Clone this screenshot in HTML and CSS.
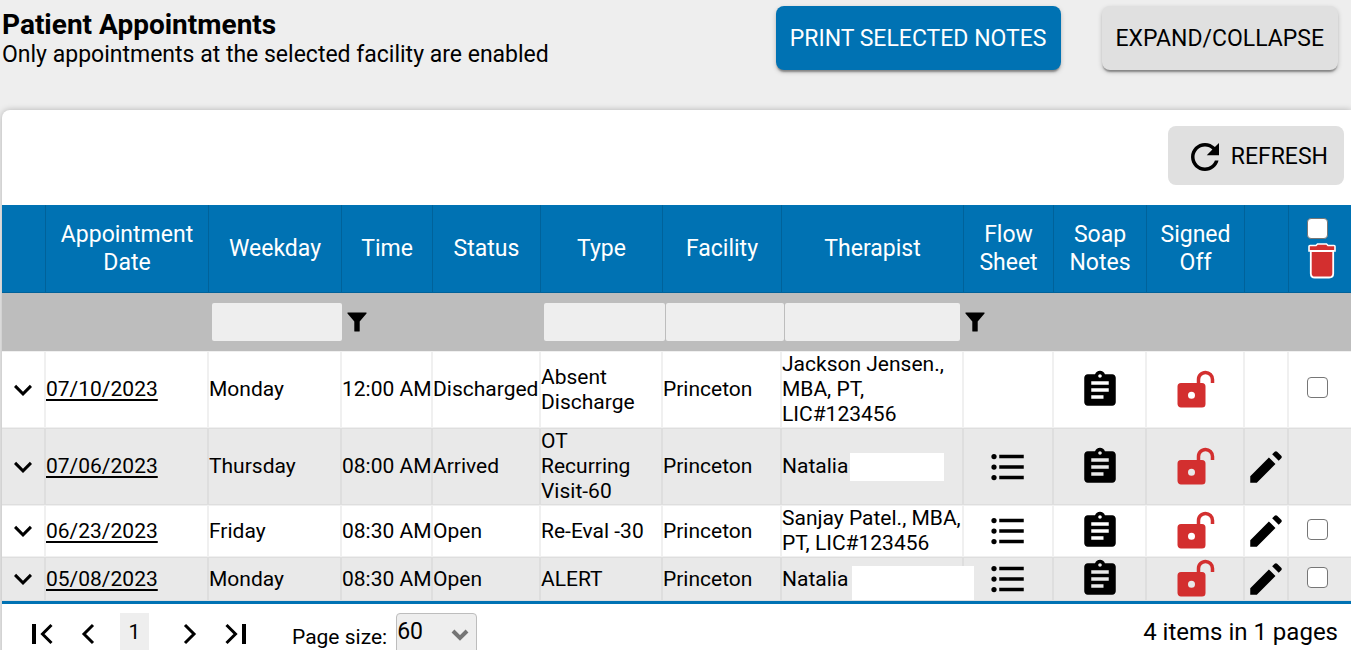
FILE: index.html
```html
<!DOCTYPE html>
<html lang="en">
<head>
<meta charset="utf-8">
<meta name="viewport" content="width=device-width, initial-scale=1">
<title>Patient Appointments</title>
<link rel="stylesheet" href="styles.css">
</head>
<body>
<svg class="sprite" aria-hidden="true">
  <symbol id="i-refresh" viewBox="0 0 24 24"><path d="M17.65 6.35C16.2 4.9 14.21 4 12 4c-4.42 0-7.99 3.58-7.99 8s3.57 8 7.99 8c3.73 0 6.84-2.55 7.73-6h-2.08c-.82 2.33-3.04 4-5.65 4-3.31 0-6-2.69-6-6s2.69-6 6-6c1.66 0 3.14.69 4.22 1.78L13 11h7V4l-2.35 2.35z"/></symbol>
  <symbol id="i-notes" viewBox="0 0 24 24"><path d="M19 3h-4.18C14.4 1.84 13.3 1 12 1s-2.4.84-2.82 2H5c-1.1 0-2 .9-2 2v14c0 1.1.9 2 2 2h14c1.1 0 2-.9 2-2V5c0-1.1-.9-2-2-2zm-7 0c.55 0 1 .45 1 1s-.45 1-1 1-1-.45-1-1 .45-1 1-1zm2 14H7v-2h7v2zm3-4H7v-2h10v2zm0-4H7V7h10v2z"/></symbol>
  <symbol id="i-list" viewBox="0 0 24 24"><circle cx="4" cy="6" r="1.5"/><circle cx="4" cy="12" r="1.5"/><circle cx="4" cy="18" r="1.5"/><path d="M7 5h14v2H7zM7 11h14v2H7zM7 17h14v2H7z"/></symbol>
  <symbol id="i-unlock" viewBox="0 0 24 24"><path d="M18 1c-2.76 0-5 2.24-5 5v2H4a2 2 0 0 0-2 2v10c0 1.11.89 2 2 2h12a2 2 0 0 0 2-2V10a2 2 0 0 0-2-2h-1V6a3 3 0 0 1 6 0v2h2V6a5 5 0 0 0-5-5m-8 12a2 2 0 1 1 0 4 2 2 0 0 1 0-4z"/></symbol>
  <symbol id="i-pencil" viewBox="0 0 24 24"><path d="M20.71 7.04c.39-.39.39-1.04 0-1.41l-2.34-2.34c-.37-.39-1.02-.39-1.41 0l-1.44 1.43 3.75 3.75M3 17.25V21h3.75L17.41 10.330l-3.75-3.75L3 17.25z"/></symbol>
  <symbol id="i-down" viewBox="0 0 24 24"><path d="M7.41 8.58 12 13.17l4.59-4.59L18 10l-6 6-6-6 1.41-1.42z"/></symbol>
  <symbol id="i-funnel" viewBox="0 0 20 20"><path d="M1 .5h18a.6.6 0 0 1 .5 1L12.7 9.600v9.400q0 .6-.6.6H7.900q-.6 0-.6-.6V9.600L.5 1.500a.6.600 0 0 1 .5-1z"/></symbol>
  <symbol id="i-trash" viewBox="0 0 28 36"><path d="M1 3.500q0-1 1-1h6l1.500-1.500h9l1.500 1.500h6q1 0 1 1v4.500H1z" fill="#d32f2f" stroke="#fff" stroke-width="1.600"/><path d="M2.800 8h22.400v22.500q0 4-4 4H6.800q-4 0-4-4z" fill="#d32f2f" stroke="#fff" stroke-width="1.800"/></symbol>
  <symbol id="i-first" viewBox="0 0 24 24"><path d="M2 2h4v20H2z"/><path d="M21.500 3 12.500 12l9 9" fill="none" stroke="#000" stroke-width="3"/></symbol>
  <symbol id="i-prev" viewBox="0 0 24 24"><path d="M17 3 8 12l9 9" fill="none" stroke="#000" stroke-width="3"/></symbol>
</svg>

<header class="page-head">
  <div class="page-title">
    <h1>Patient Appointments</h1>
    <p>Only appointments at the selected facility are enabled</p>
  </div>
  <div class="page-actions">
    <button class="btn btn-primary" type="button">PRINT SELECTED NOTES</button>
    <button class="btn btn-raised" type="button">EXPAND/COLLAPSE</button>
  </div>
</header>

<main class="card">
  <div class="toolbar">
    <button class="btn btn-refresh" type="button"><svg class="icon"><use href="#i-refresh"/></svg>REFRESH</button>
  </div>

  <table class="grid">
    <colgroup>
      <col class="c-toggle"><col class="c-date"><col class="c-weekday"><col class="c-time"><col class="c-status"><col class="c-type"><col class="c-facility"><col class="c-therapist"><col class="c-flow"><col class="c-soap"><col class="c-signed"><col class="c-edit"><col class="c-select">
    </colgroup>
    <thead>
      <tr class="labels">
        <th></th><th>Appointment Date</th><th>Weekday</th><th>Time</th><th>Status</th><th>Type</th><th>Facility</th><th>Therapist</th><th>Flow Sheet</th><th>Soap Notes</th><th>Signed Off</th><th></th>
        <th class="select-all"><input class="check" type="checkbox" aria-label="Select all"><button class="plain" type="button" aria-label="Delete selected"><svg class="trash"><use href="#i-trash"/></svg></button></th>
      </tr>
      <tr class="filters">
        <td></td><td></td>
        <td><div class="filter"><input class="f-weekday" type="text" aria-label="Filter weekday"><button class="plain" type="button" aria-label="Weekday filter options"><svg class="funnel"><use href="#i-funnel"/></svg></button></div></td>
        <td></td><td></td>
        <td><div class="filter"><input class="f-type" type="text" aria-label="Filter type"></div></td>
        <td><div class="filter"><input class="f-facility" type="text" aria-label="Filter facility"></div></td>
        <td><div class="filter"><input class="f-therapist" type="text" aria-label="Filter therapist"><button class="plain" type="button" aria-label="Therapist filter options"><svg class="funnel"><use href="#i-funnel"/></svg></button></div></td>
        <td></td><td></td><td></td><td></td><td></td>
      </tr>
    </thead>
    <tbody>
      <tr>
        <td class="mid"><button class="plain" type="button" aria-label="Expand"><svg class="chevron"><use href="#i-down"/></svg></button></td>
        <td><a href="#">07/10/2023</a></td><td>Monday</td><td class="nowrap">12:00 AM</td><td>Discharged</td><td>Absent Discharge</td><td>Princeton</td><td>Jackson Jensen., MBA, PT, LIC#123456</td>
        <td></td>
        <td class="mid"><button class="plain" type="button" aria-label="Soap notes"><svg class="icon"><use href="#i-notes"/></svg></button></td>
        <td class="mid"><button class="plain" type="button" aria-label="Not signed off"><svg class="icon red"><use href="#i-unlock"/></svg></button></td>
        <td></td>
        <td class="mid"><input class="check" type="checkbox" aria-label="Select 07/10/2023"></td>
      </tr>
      <tr>
        <td class="mid"><button class="plain" type="button" aria-label="Expand"><svg class="chevron"><use href="#i-down"/></svg></button></td>
        <td><a href="#">07/06/2023</a></td><td>Thursday</td><td class="nowrap">08:00 AM</td><td>Arrived</td><td>OT Recurring Visit-60</td><td>Princeton</td><td><div class="person">Natalia<span class="mask"></span></div></td>
        <td class="mid"><button class="plain" type="button" aria-label="Flow sheet"><svg class="icon"><use href="#i-list"/></svg></button></td>
        <td class="mid"><button class="plain" type="button" aria-label="Soap notes"><svg class="icon"><use href="#i-notes"/></svg></button></td>
        <td class="mid"><button class="plain" type="button" aria-label="Not signed off"><svg class="icon red"><use href="#i-unlock"/></svg></button></td>
        <td class="mid"><button class="plain" type="button" aria-label="Edit"><svg class="icon"><use href="#i-pencil"/></svg></button></td>
        <td></td>
      </tr>
      <tr>
        <td class="mid"><button class="plain" type="button" aria-label="Expand"><svg class="chevron"><use href="#i-down"/></svg></button></td>
        <td><a href="#">06/23/2023</a></td><td>Friday</td><td class="nowrap">08:30 AM</td><td>Open</td><td>Re-Eval -30</td><td>Princeton</td><td>Sanjay Patel., MBA, PT, LIC#123456</td>
        <td class="mid"><button class="plain" type="button" aria-label="Flow sheet"><svg class="icon"><use href="#i-list"/></svg></button></td>
        <td class="mid"><button class="plain" type="button" aria-label="Soap notes"><svg class="icon"><use href="#i-notes"/></svg></button></td>
        <td class="mid"><button class="plain" type="button" aria-label="Not signed off"><svg class="icon red"><use href="#i-unlock"/></svg></button></td>
        <td class="mid"><button class="plain" type="button" aria-label="Edit"><svg class="icon"><use href="#i-pencil"/></svg></button></td>
        <td class="mid"><input class="check" type="checkbox" aria-label="Select 06/23/2023"></td>
      </tr>
      <tr>
        <td class="mid"><button class="plain" type="button" aria-label="Expand"><svg class="chevron"><use href="#i-down"/></svg></button></td>
        <td><a href="#">05/08/2023</a></td><td>Monday</td><td class="nowrap">08:30 AM</td><td>Open</td><td>ALERT</td><td>Princeton</td><td><div class="person">Natalia<span class="mask mask-wide"></span></div></td>
        <td class="mid"><button class="plain" type="button" aria-label="Flow sheet"><svg class="icon"><use href="#i-list"/></svg></button></td>
        <td class="mid"><button class="plain" type="button" aria-label="Soap notes"><svg class="icon"><use href="#i-notes"/></svg></button></td>
        <td class="mid"><button class="plain" type="button" aria-label="Not signed off"><svg class="icon red"><use href="#i-unlock"/></svg></button></td>
        <td class="mid"><button class="plain" type="button" aria-label="Edit"><svg class="icon"><use href="#i-pencil"/></svg></button></td>
        <td class="mid"><input class="check" type="checkbox" aria-label="Select 05/08/2023"></td>
      </tr>
    </tbody>
  </table>

  <footer class="pager">
    <nav class="pages" aria-label="Pages">
      <button class="plain" type="button" aria-label="First page"><svg class="arrow"><use href="#i-first"/></svg></button>
      <button class="plain" type="button" aria-label="Previous page"><svg class="arrow"><use href="#i-prev"/></svg></button>
      <a class="current" href="#">1</a>
      <button class="plain next" type="button" aria-label="Next page"><svg class="arrow flip"><use href="#i-prev"/></svg></button>
      <button class="plain" type="button" aria-label="Last page"><svg class="arrow flip"><use href="#i-first"/></svg></button>
    </nav>
    <label class="size-label" for="page-size">Page size:</label>
    <div class="size-box">
      <select id="page-size"><option>60</option></select>
      <svg class="size-arrow" viewBox="0 0 18 12" aria-hidden="true"><path d="M2 2l7 7 7-7" fill="none" stroke="#757575" stroke-width="4"/></svg>
    </div>
    <p class="summary">4 items in 1 pages</p>
  </footer>
</main>
</body>
</html>
```

FILE: styles.css
```css
* { box-sizing: border-box; }

body {
  margin: 0;
  height: 100vh;
  overflow: hidden;
  background: #eee;
  color: #000;
  font-family: Roboto, "Liberation Sans", sans-serif;
  font-size: 21px;
  line-height: 25px;
}

h1, p { margin: 0; }
button, input, select { font: inherit; color: inherit; }
svg { display: block; fill: currentColor; }
.sprite { position: absolute; width: 0; height: 0; }

.page-head {
  display: flex;
  justify-content: space-between;
  align-items: flex-start;
  padding: 6px 13px 0 2px;
  height: 110px;
}
.page-title { padding-top: 4px; }
.page-title h1 { font-size: 28px; line-height: 30px; font-weight: 700; }
.page-title p { font-size: 23px; line-height: 30px; }
.page-actions { display: flex; gap: 41px; }

.btn {
  border: 0;
  border-radius: 8px;
  padding: 0 14px;
  height: 64px;
  font-size: 23px;
  white-space: nowrap;
  background: #e0e0e0;
}
.btn-primary { background: #0072b3; color: #fff; }
.btn-primary, .btn-raised {
  box-shadow: 0 3px 2px -1px rgba(0, 0, 0, .35), 0 2px 5px rgba(0, 0, 0, .2);
}
.btn-refresh {
  display: flex;
  align-items: center;
  gap: 5px;
  height: 59px;
  padding: 2px 16px 0;
}

.card {
  margin-left: 2px;
  min-height: 540px;
  background: #fff;
  border-radius: 8px 0 0 0;
  box-shadow: 0 0 6px rgba(0, 0, 0, .25);
}
.toolbar {
  display: flex;
  justify-content: flex-end;
  padding: 16px 7px 20px;
}

.grid {
  width: 100%;
  table-layout: fixed;
  border-collapse: separate;
  border-spacing: 0;
  border-bottom: 3px solid #0072b3;
}
.c-toggle { width: 43px; }
.c-date { width: 163px; }
.c-weekday { width: 133px; }
.c-time { width: 91px; }
.c-status { width: 108px; }
.c-type { width: 122px; }
.c-facility { width: 119px; }
.c-therapist { width: 182px; }
.c-flow { width: 90px; }
.c-soap { width: 93px; }
.c-signed { width: 98px; }
.c-edit { width: 44px; }
.c-select { width: 63px; }

.grid th, .grid td { padding: 0; text-align: left; vertical-align: middle; }

.labels th {
  height: 88px;
  background: #0072b3;
  color: #fff;
  border-left: 1px solid #00629a;
  border-bottom: 1px solid #00629a;
  font-size: 23px;
  line-height: 28px;
  font-weight: 400;
  text-align: center;
}
.labels th:first-child { border-left: 0; }

.filters td { height: 58px; padding-left: 4px; background: #bdbdbd; }
.filter { display: flex; align-items: center; gap: 5px; white-space: nowrap; }
.filter input {
  flex: none;
  height: 38px;
  padding: 0 8px;
  border: 0;
  border-radius: 2px;
  background: #eee;
}
.f-weekday { width: 130px; }
.f-type { width: 121px; }
.f-facility { width: 118px; }
.f-therapist { width: 175px; }

.grid tbody td {
  height: 44px;
  border: 1px solid #f0f0f0;
}
.grid tbody tr:nth-child(even) td { background: #e9e9e9; border-color: #dedede; }
.grid tbody td:first-child { border-left: 0; }
.grid tbody td:last-child { border-right: 0; }
.grid tbody a { color: #000; text-underline-offset: 3px; text-decoration-thickness: 2px; }
.nowrap { white-space: nowrap; }

.plain {
  display: block;
  padding: 0;
  border: 0;
  background: none;
}
.mid .plain, .select-all .plain { margin: 0 auto; }
.icon { width: 42px; height: 42px; }
.red { color: #d32f2f; }
.chevron { width: 36px; height: 36px; }
.funnel { width: 20px; height: 20px; }
.trash { width: 28px; height: 36px; }

.check {
  appearance: none;
  display: block;
  width: 21px;
  height: 21px;
  margin: 0 auto 4px;
  border: 1px solid #767676;
  border-radius: 4px;
  background: #fff;
}
.check:checked { background: #0072b3; }
.grid td.mid:last-child { padding-right: 5px; }
.select-all .check { margin-left: 18px; }
.select-all .plain { margin-left: 19px; }

.person { display: flex; align-items: center; gap: 2px; min-height: 42px; }
.mask { position: relative; z-index: 1; flex: none; width: 94px; height: 28px; background: #fff; }
.mask-wide { width: 122px; height: 34px; margin: 8px 0 0 2px; }

.pager { display: flex; align-items: flex-start; padding: 9px 13px 0 28px; }
.pages { display: flex; align-items: center; }
.arrow { width: 24px; height: 24px; }
.flip { transform: scaleX(-1); }
.pages .plain + .plain { margin-left: 22px; }
.current {
  margin-left: 20px;
  width: 29px;
  height: 42px;
  line-height: 38px;
  text-align: center;
  background: #eee;
  color: #000;
  text-decoration: none;
}
.next { margin-left: 29px; }
.size-label { margin: 12px 9px 0 44px; }
.size-box { position: relative; }
.size-box select {
  appearance: none;
  width: 81px;
  height: 44px;
  padding: 0 0 7px;
  border: 1px solid #bdbdbd;
  border-radius: 4px;
  background: #eee;
  font-size: 23px;
}
.size-arrow { position: absolute; right: 8px; top: 16px; width: 18px; height: 12px; }
.summary { margin-left: auto; padding-top: 5px; font-size: 24px; line-height: 28px; }
```
